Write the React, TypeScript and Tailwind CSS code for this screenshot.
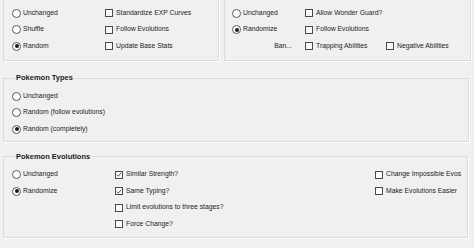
import React from 'react';

function Radio({ label, checked = false }: { label: string; checked?: boolean }) {
  return (
    <div className="flex items-center gap-[2px] h-[16.5px]">
      <span className="w-[9px] h-[9px] rounded-full border border-[#5a5a5a] bg-white flex items-center justify-center shrink-0">
        {checked && <span className="w-[4px] h-[4px] rounded-full bg-[#1a1a1a]" />}
      </span>
      <span className="whitespace-nowrap">{label}</span>
    </div>
  );
}

function Check({ label, checked = false }: { label: string; checked?: boolean }) {
  return (
    <div className="flex items-center gap-[3px] h-[16.5px]">
      <span className="w-[8px] h-[8px] border border-[#4a4a4a] bg-[#fafafa] flex items-center justify-center shrink-0">
        {checked && (
          <svg viewBox="0 0 8 8" className="w-[7px] h-[7px]">
            <path d="M1 4.2 L3 6.2 L7 1.5" fill="none" stroke="#222" strokeWidth="1" />
          </svg>
        )}
      </span>
      <span className="whitespace-nowrap">{label}</span>
    </div>
  );
}

export default function App() {
  return (
    <div className="w-[474px] h-[248px] bg-[#f0f0f0] overflow-hidden font-['Liberation_Sans',Arial,sans-serif] text-[6.8px] leading-none text-[#1c1c1c]">
      {/* top row, titles are scrolled out of view */}
      <div className="flex gap-[5px] pl-[3px] h-[61px]">
        <div className="w-[216px] border border-t-0 border-[#dcdcdc] shadow-[1px_1px_0_#fff] pt-[5px] pl-[8px] flex">
          <div className="w-[93px]">
            <Radio label="Unchanged" />
            <Radio label="Shuffle" />
            <Radio label="Random" checked />
          </div>
          <div>
            <Check label="Standardize EXP Curves" />
            <Check label="Follow Evolutions" />
            <Check label="Update Base Stats" />
          </div>
        </div>
        <div className="w-[247px] border border-t-0 border-[#dcdcdc] shadow-[1px_1px_0_#fff] pt-[5px] pl-[7px] flex">
          <div className="w-[73px]">
            <Radio label="Unchanged" />
            <Radio label="Randomize" checked />
            <div className="h-[16.5px] flex items-center justify-end pr-[13px]">Ban...</div>
          </div>
          <div className="w-[81px]">
            <Check label="Allow Wonder Guard?" />
            <Check label="Follow Evolutions" />
            <Check label="Trapping Abilities" />
          </div>
          <div className="pt-[33px]">
            <Check label="Negative Abilities" />
          </div>
        </div>
      </div>

      <fieldset className="ml-[3px] mt-[12px] w-[466px] border border-[#dcdcdc] shadow-[1px_1px_0_#fff] pl-[8px] pt-[5px] pb-[3px]">
        <legend className="ml-[3px] px-[1px] font-bold text-[7.5px] leading-[10px]">Pokemon Types</legend>
        <Radio label="Unchanged" />
        <Radio label="Random (follow evolutions)" />
        <Radio label="Random (completely)" checked />
      </fieldset>

      <fieldset className="ml-[3px] mt-[10px] w-[465px] border border-[#dcdcdc] shadow-[1px_1px_0_#fff] pl-[8px] pt-[5px] pb-[4px] flex">
        <legend className="ml-[3px] px-[1px] font-bold text-[7.5px] leading-[10px]">Pokemon Evolutions</legend>
        <div className="flex">
          <div className="w-[103px]">
            <Radio label="Unchanged" />
            <Radio label="Randomize" checked />
          </div>
          <div className="w-[260px]">
            <Check label="Similar Strength?" checked />
            <Check label="Same Typing?" checked />
            <Check label="Limit evolutions to three stages?" />
            <Check label="Force Change?" />
          </div>
          <div>
            <Check label="Change Impossible Evos" />
            <Check label="Make Evolutions Easier" />
          </div>
        </div>
      </fieldset>
    </div>
  );
}
